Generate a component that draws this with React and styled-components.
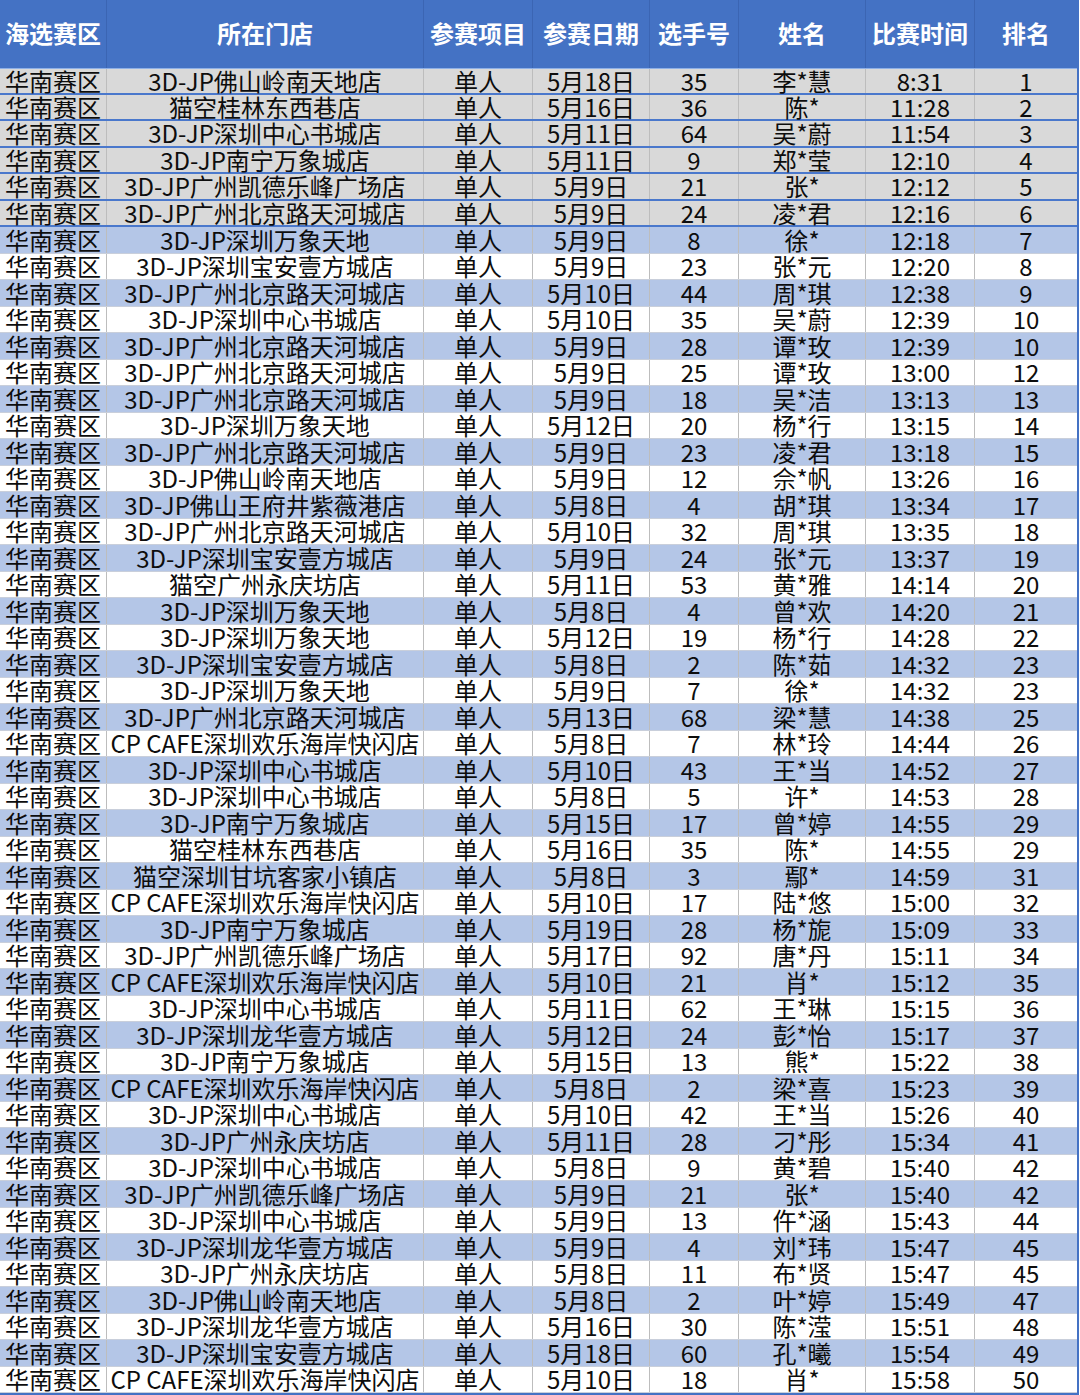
import React from "react";
import styled, { createGlobalStyle } from "styled-components";

const GlobalStyle = createGlobalStyle`
  html, body { margin: 0; padding: 0; background: #ffffff; }
  body { font-family: "Noto Sans CJK SC", "Noto Sans", sans-serif; }
`;

const COLS = "107px 317px 109px 117px 89px 127px 109px 102px";

const Table = styled.div`
  width: 1079px;
  box-sizing: border-box;
  border-right: 2px solid #4472c4;
  border-bottom: 2px solid #4472c4;
  display: flex;
  flex-direction: column;
`;

const HeaderRow = styled.div`
  display: grid;
  grid-template-columns: ${COLS};
  height: 68px;
  background: #4472c4;
`;

const HeaderCell = styled.div`
  display: flex;
  align-items: center;
  justify-content: center;
  color: #ffffff;
  font-weight: 700;
  font-size: 24px;
  line-height: 30px;
  white-space: nowrap;
  border-right: ${(p) => (p.$last ? "none" : "1px solid #3b65b3")};
  padding-bottom: 2px;
`;

const BG = { gray: "#d9d9d9", blue: "#b4c6e7", white: "#ffffff" };

const Row = styled.div`
  display: grid;
  grid-template-columns: ${COLS};
  height: 26.5px;
  box-sizing: border-box;
  background: ${(p) => BG[p.$tone]};
  border-bottom: ${(p) =>
    p.$tone === "gray" ? "2px solid #4a78cc" : "1px solid #c9cfdb"};
  border-top: ${(p) => (p.$first ? "1px solid #8fb0e6" : "none")};
`;

const Cell = styled.div`
  display: flex;
  align-items: center;
  justify-content: center;
  font-size: 24px;
  line-height: 24px;
  color: #0d0d0d;
  white-space: nowrap;
  border-right: ${(p) => (p.$last ? "none" : "1px solid #bdbdbd")};
`;

const headers = ["海选赛区", "所在门店", "参赛项目", "参赛日期", "选手号", "姓名", "比赛时间", "排名"];

const data = [
  ["3D-JP佛山岭南天地店", "5月18日", "35", "李*慧", "8:31", "1"],
  ["猫空桂林东西巷店", "5月16日", "36", "陈*", "11:28", "2"],
  ["3D-JP深圳中心书城店", "5月11日", "64", "吴*蔚", "11:54", "3"],
  ["3D-JP南宁万象城店", "5月11日", "9", "郑*莹", "12:10", "4"],
  ["3D-JP广州凯德乐峰广场店", "5月9日", "21", "张*", "12:12", "5"],
  ["3D-JP广州北京路天河城店", "5月9日", "24", "凌*君", "12:16", "6"],
  ["3D-JP深圳万象天地", "5月9日", "8", "徐*", "12:18", "7"],
  ["3D-JP深圳宝安壹方城店", "5月9日", "23", "张*元", "12:20", "8"],
  ["3D-JP广州北京路天河城店", "5月10日", "44", "周*琪", "12:38", "9"],
  ["3D-JP深圳中心书城店", "5月10日", "35", "吴*蔚", "12:39", "10"],
  ["3D-JP广州北京路天河城店", "5月9日", "28", "谭*玫", "12:39", "10"],
  ["3D-JP广州北京路天河城店", "5月9日", "25", "谭*玫", "13:00", "12"],
  ["3D-JP广州北京路天河城店", "5月9日", "18", "吴*洁", "13:13", "13"],
  ["3D-JP深圳万象天地", "5月12日", "20", "杨*行", "13:15", "14"],
  ["3D-JP广州北京路天河城店", "5月9日", "23", "凌*君", "13:18", "15"],
  ["3D-JP佛山岭南天地店", "5月9日", "12", "佘*帆", "13:26", "16"],
  ["3D-JP佛山王府井紫薇港店", "5月8日", "4", "胡*琪", "13:34", "17"],
  ["3D-JP广州北京路天河城店", "5月10日", "32", "周*琪", "13:35", "18"],
  ["3D-JP深圳宝安壹方城店", "5月9日", "24", "张*元", "13:37", "19"],
  ["猫空广州永庆坊店", "5月11日", "53", "黄*雅", "14:14", "20"],
  ["3D-JP深圳万象天地", "5月8日", "4", "曾*欢", "14:20", "21"],
  ["3D-JP深圳万象天地", "5月12日", "19", "杨*行", "14:28", "22"],
  ["3D-JP深圳宝安壹方城店", "5月8日", "2", "陈*茹", "14:32", "23"],
  ["3D-JP深圳万象天地", "5月9日", "7", "徐*", "14:32", "23"],
  ["3D-JP广州北京路天河城店", "5月13日", "68", "梁*慧", "14:38", "25"],
  ["CP CAFE深圳欢乐海岸快闪店", "5月8日", "7", "林*玲", "14:44", "26"],
  ["3D-JP深圳中心书城店", "5月10日", "43", "王*当", "14:52", "27"],
  ["3D-JP深圳中心书城店", "5月8日", "5", "许*", "14:53", "28"],
  ["3D-JP南宁万象城店", "5月15日", "17", "曾*婷", "14:55", "29"],
  ["猫空桂林东西巷店", "5月16日", "35", "陈*", "14:55", "29"],
  ["猫空深圳甘坑客家小镇店", "5月8日", "3", "鄢*", "14:59", "31"],
  ["CP CAFE深圳欢乐海岸快闪店", "5月10日", "17", "陆*悠", "15:00", "32"],
  ["3D-JP南宁万象城店", "5月19日", "28", "杨*旎", "15:09", "33"],
  ["3D-JP广州凯德乐峰广场店", "5月17日", "92", "唐*丹", "15:11", "34"],
  ["CP CAFE深圳欢乐海岸快闪店", "5月10日", "21", "肖*", "15:12", "35"],
  ["3D-JP深圳中心书城店", "5月11日", "62", "王*琳", "15:15", "36"],
  ["3D-JP深圳龙华壹方城店", "5月12日", "24", "彭*怡", "15:17", "37"],
  ["3D-JP南宁万象城店", "5月15日", "13", "熊*", "15:22", "38"],
  ["CP CAFE深圳欢乐海岸快闪店", "5月8日", "2", "梁*喜", "15:23", "39"],
  ["3D-JP深圳中心书城店", "5月10日", "42", "王*当", "15:26", "40"],
  ["3D-JP广州永庆坊店", "5月11日", "28", "刁*彤", "15:34", "41"],
  ["3D-JP深圳中心书城店", "5月8日", "9", "黄*碧", "15:40", "42"],
  ["3D-JP广州凯德乐峰广场店", "5月9日", "21", "张*", "15:40", "42"],
  ["3D-JP深圳中心书城店", "5月9日", "13", "仵*涵", "15:43", "44"],
  ["3D-JP深圳龙华壹方城店", "5月9日", "4", "刘*玮", "15:47", "45"],
  ["3D-JP广州永庆坊店", "5月8日", "11", "布*贤", "15:47", "45"],
  ["3D-JP佛山岭南天地店", "5月8日", "2", "叶*婷", "15:49", "47"],
  ["3D-JP深圳龙华壹方城店", "5月16日", "30", "陈*滢", "15:51", "48"],
  ["3D-JP深圳宝安壹方城店", "5月18日", "60", "孔*曦", "15:54", "49"],
  ["CP CAFE深圳欢乐海岸快闪店", "5月10日", "18", "肖*", "15:58", "50"],
];

function toneFor(i) {
  if (i < 6) return "gray";
  return (i - 6) % 2 === 0 ? "blue" : "white";
}

export default function App() {
  return (
    <>
      <GlobalStyle />
      <Table>
        <HeaderRow>
          {headers.map((h, i) => (
            <HeaderCell key={h} $last={i === headers.length - 1}>
              {h}
            </HeaderCell>
          ))}
        </HeaderRow>
        {data.map((r, i) => {
          const cells = ["华南赛区", r[0], "单人", r[1], r[2], r[3], r[4], r[5]];
          return (
            <Row key={i} $tone={toneFor(i)} $first={i === 0}>
              {cells.map((c, j) => (
                <Cell key={j} $last={j === cells.length - 1}>
                  {c}
                </Cell>
              ))}
            </Row>
          );
        })}
      </Table>
    </>
  );
}
